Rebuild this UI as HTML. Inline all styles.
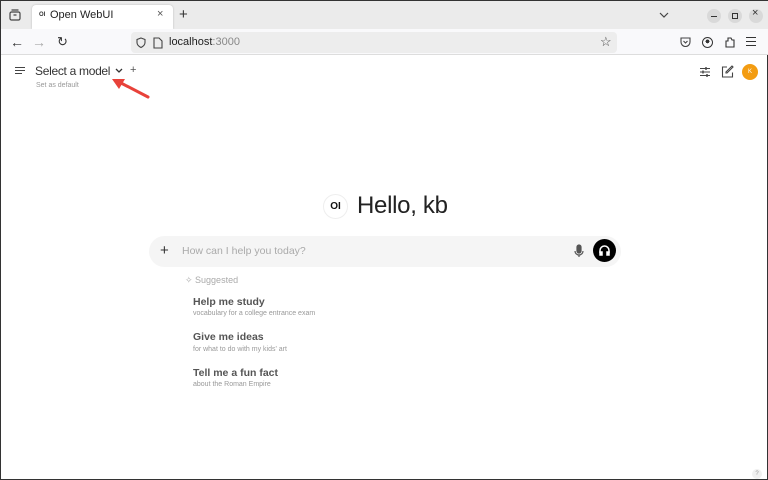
<!DOCTYPE html><html><head><style>
*{margin:0;padding:0;box-sizing:border-box}
body{width:768px;height:480px;overflow:hidden;font-family:"Liberation Sans",sans-serif;background:#fff;position:relative;border:1px solid #333}
.abs{position:absolute}
svg{position:absolute}
</style></head><body>
<div class="abs" style="left:0;top:0;width:768px;height:28px;background:#ebebeb"></div>
<div class="abs" style="left:31px;top:4px;width:141px;height:24px;background:#fff;border-radius:4px 4px 0 0;box-shadow:0 0 2px rgba(0,0,0,.2)"></div>
<svg style="left:8px;top:8px" width="12" height="12" viewBox="0 0 12 12" fill="none" stroke="#444" stroke-width="1.2"><rect x="1" y="3" width="10" height="8" rx="1.5"/><path d="M2.5 1h7M4.5 6h3"/></svg>
<div class="abs" style="left:38px;top:11px;font-size:6px;font-weight:bold;color:#333">OI</div>
<div class="abs" style="left:49px;top:8px;font-size:11px;color:#222">Open WebUI</div>
<div class="abs" style="left:156px;top:7px;font-size:11px;color:#555">×</div>
<div class="abs" style="left:178px;top:5px;font-size:15px;color:#333">+</div>
<svg style="left:657px;top:10px" width="12" height="8" viewBox="0 0 12 8" fill="none" stroke="#444" stroke-width="1.2"><path d="M2 2l4 4 4-4"/></svg>
<div class="abs" style="left:706px;top:8px;width:14px;height:14px;border-radius:50%;background:#d9d9d9"></div>
<div class="abs" style="left:727px;top:8px;width:14px;height:14px;border-radius:50%;background:#d9d9d9"></div>
<div class="abs" style="left:748px;top:8px;width:14px;height:14px;border-radius:50%;background:#d9d9d9"></div>
<div class="abs" style="left:710px;top:15px;width:6px;height:1px;background:#333"></div>
<div class="abs" style="left:731px;top:12px;width:6px;height:6px;border:1px solid #333"></div>
<div class="abs" style="left:751px;top:6px;font-size:11px;color:#333">×</div>
<div class="abs" style="left:0;top:28px;width:768px;height:26px;background:#f9f9fb;border-bottom:1px solid #ddd"></div>
<div class="abs" style="left:9px;top:33px;font-size:14px;color:#333">←</div>
<div class="abs" style="left:31px;top:33px;font-size:14px;color:#aaa">→</div>
<div class="abs" style="left:56px;top:33px;font-size:13px;color:#333">↻</div>
<div class="abs" style="left:130px;top:31px;width:486px;height:21px;background:#ededed;border-radius:4px"></div>
<svg style="left:134px;top:36px" width="12" height="12" viewBox="0 0 12 12" fill="none" stroke="#444" stroke-width="1.1"><path d="M6 1l4 1.5v3c0 2.5-2 4-4 5-2-1-4-2.5-4-5v-3z"/></svg>
<svg style="left:152px;top:36px" width="10" height="12" viewBox="0 0 10 12" fill="none" stroke="#444" stroke-width="1.1"><path d="M1 1h5l3 3v7H1z"/></svg>
<div class="abs" style="left:168px;top:35px;font-size:11px;color:#222">localhost<span style="color:#888">:3000</span></div>
<div class="abs" style="left:599px;top:33px;font-size:13px;color:#444">☆</div>
<svg style="left:679px;top:36px" width="11" height="10" viewBox="0 0 11 10" fill="none" stroke="#444" stroke-width="1.1"><path d="M1 1h9v4a4.5 4.5 0 01-9 0z M3.5 4l2 2 2-2"/></svg>
<div class="abs" style="left:701px;top:36px;width:11px;height:11px;border-radius:50%;border:1.3px solid #333;background:radial-gradient(circle at 50% 38%,#333 25%,transparent 27%)"></div>
<svg style="left:723px;top:35px" width="12" height="12" viewBox="0 0 12 12" fill="none" stroke="#333" stroke-width="1.1"><path d="M2 11V5h2V2h3l1 2h2v7z"/></svg>
<div class="abs" style="left:745px;top:36px;width:10px;height:9px;border-top:1.3px solid #333;border-bottom:1.3px solid #333"></div>
<div class="abs" style="left:745px;top:40px;width:10px;height:1.3px;background:#333"></div>
<!-- app -->
<div class="abs" style="left:14px;top:66px;width:10px;height:1.3px;background:#444"></div>
<div class="abs" style="left:14px;top:69px;width:10px;height:1.3px;background:#444"></div>
<div class="abs" style="left:14px;top:72px;width:7px;height:1.3px;background:#444"></div>
<div class="abs" style="left:34px;top:63px;font-size:12px;letter-spacing:-0.3px;color:#333">Select a model</div>
<svg style="left:114px;top:67px" width="8" height="6" viewBox="0 0 8 6" fill="none" stroke="#333" stroke-width="1.3"><path d="M1 1l3 3 3-3"/></svg>
<div class="abs" style="left:129px;top:63px;font-size:11px;color:#555">+</div>
<div class="abs" style="left:35px;top:81px;font-size:7px;color:#999">Set as default</div>
<svg style="left:108px;top:74px" width="44" height="26" viewBox="0 0 44 26"><path d="M39 22L12 8" stroke="#e8423a" stroke-width="3" stroke-linecap="round"/><path d="M3 4l13 0-6 10z" fill="#e8423a"/></svg>
<svg style="left:698px;top:65px" width="12" height="12" viewBox="0 0 12 12" fill="none" stroke="#444" stroke-width="1.1"><path d="M1 2.5h10M1 6h10M1 9.5h10"/><path d="M7 1v3M4 4.5v3M8 8v3" stroke-width="1.4"/></svg>
<svg style="left:720px;top:64px" width="13" height="13" viewBox="0 0 13 13" fill="none" stroke="#444" stroke-width="1.1"><path d="M6 2H1.5v10h10V7.5M11 1l1 1-6 6H5V7z"/></svg>
<div class="abs" style="left:741px;top:63px;width:16px;height:16px;border-radius:50%;background:#f39c12;color:#fff;font-size:6px;text-align:center;line-height:16px">K</div>
<div class="abs" style="left:322px;top:193px;width:25px;height:25px;border-radius:50%;border:1px solid #eee;font-size:10px;font-weight:bold;text-align:center;line-height:23px;color:#111">OI</div>
<div class="abs" style="left:356px;top:191px;font-size:24px;letter-spacing:-0.3px;color:#222">Hello, kb</div>
<div class="abs" style="left:148px;top:235px;width:472px;height:31px;border-radius:16px;background:#f5f5f5"></div>
<div class="abs" style="left:159px;top:241px;font-size:15px;color:#333">+</div>
<div class="abs" style="left:181px;top:244px;font-size:10.5px;color:#aaa">How can I help you today?</div>
<svg style="left:573px;top:243px" width="10" height="14" viewBox="0 0 10 14" fill="none" stroke="#555" stroke-width="1.2"><rect x="3" y="1" width="4" height="8" rx="2" fill="#555"/><path d="M1 7a4 4 0 008 0M5 11v2"/></svg>
<div class="abs" style="left:592px;top:238px;width:23px;height:23px;border-radius:50%;background:#000"></div>
<svg style="left:597px;top:243px" width="13" height="13" viewBox="0 0 13 13" fill="none" stroke="#fff" stroke-width="1.5"><path d="M2 9V6.5a4.5 4.5 0 019 0V9"/><rect x="2" y="8" width="2" height="3" fill="#fff"/><rect x="9" y="8" width="2" height="3" fill="#fff"/></svg>
<div class="abs" style="left:184px;top:274px;font-size:9px;color:#aaa">✧ Suggested</div>
<div class="abs" style="left:192px;top:295px;font-size:10.5px;font-weight:bold;color:#555">Help me study</div>
<div class="abs" style="left:192px;top:309px;font-size:7px;color:#999">vocabulary for a college entrance exam</div>
<div class="abs" style="left:192px;top:330px;font-size:10.5px;font-weight:bold;color:#555">Give me ideas</div>
<div class="abs" style="left:192px;top:345px;font-size:7px;color:#999">for what to do with my kids' art</div>
<div class="abs" style="left:192px;top:366px;font-size:10.5px;font-weight:bold;color:#555">Tell me a fun fact</div>
<div class="abs" style="left:192px;top:380px;font-size:7px;color:#999">about the Roman Empire</div>
<div class="abs" style="left:751px;top:468px;width:10px;height:10px;border-radius:50%;background:#f0f0f0;font-size:6px;color:#999;text-align:center;line-height:10px">?</div>
</body></html>
